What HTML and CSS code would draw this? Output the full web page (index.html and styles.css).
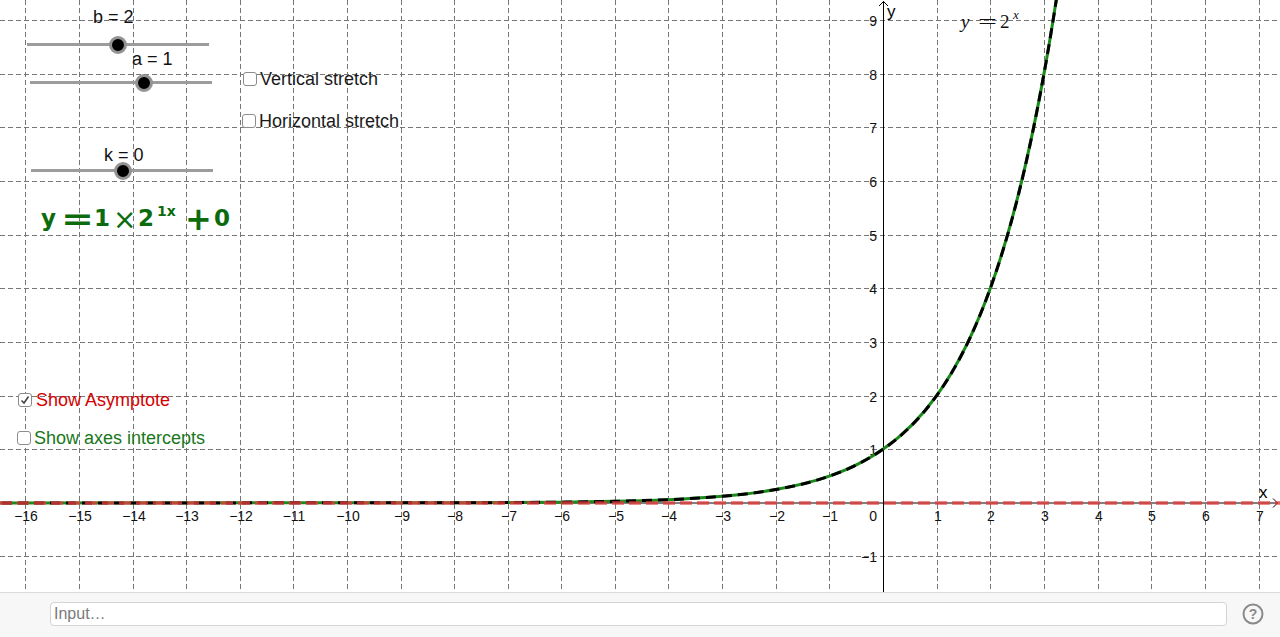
FILE: index.html
```html
<!DOCTYPE html>
<html lang="en">
<head>
<meta charset="utf-8">
<title>Exponential functions</title>
<link rel="stylesheet" href="styles.css">
</head>
<body>
<div class="app">
  <div class="canvas">
    <svg class="graph" width="1280" height="592" viewBox="0 0 1280 592" xmlns="http://www.w3.org/2000/svg">
      <g class="grid">
        <line x1="25.5" y1="0" x2="25.5" y2="592"/>
        <line x1="79.5" y1="0" x2="79.5" y2="592"/>
        <line x1="133.5" y1="0" x2="133.5" y2="592"/>
        <line x1="186.5" y1="0" x2="186.5" y2="592"/>
        <line x1="240.5" y1="0" x2="240.5" y2="592"/>
        <line x1="293.5" y1="0" x2="293.5" y2="592"/>
        <line x1="347.5" y1="0" x2="347.5" y2="592"/>
        <line x1="401.5" y1="0" x2="401.5" y2="592"/>
        <line x1="454.5" y1="0" x2="454.5" y2="592"/>
        <line x1="508.5" y1="0" x2="508.5" y2="592"/>
        <line x1="561.5" y1="0" x2="561.5" y2="592"/>
        <line x1="615.5" y1="0" x2="615.5" y2="592"/>
        <line x1="668.5" y1="0" x2="668.5" y2="592"/>
        <line x1="722.5" y1="0" x2="722.5" y2="592"/>
        <line x1="776.5" y1="0" x2="776.5" y2="592"/>
        <line x1="829.5" y1="0" x2="829.5" y2="592"/>
        <line x1="937.5" y1="0" x2="937.5" y2="592"/>
        <line x1="990.5" y1="0" x2="990.5" y2="592"/>
        <line x1="1044.5" y1="0" x2="1044.5" y2="592"/>
        <line x1="1098.5" y1="0" x2="1098.5" y2="592"/>
        <line x1="1151.5" y1="0" x2="1151.5" y2="592"/>
        <line x1="1205.5" y1="0" x2="1205.5" y2="592"/>
        <line x1="1259.5" y1="0" x2="1259.5" y2="592"/>
        <line x1="0" y1="20.5" x2="1280" y2="20.5"/>
        <line x1="0" y1="74.5" x2="1280" y2="74.5"/>
        <line x1="0" y1="127.5" x2="1280" y2="127.5"/>
        <line x1="0" y1="181.5" x2="1280" y2="181.5"/>
        <line x1="0" y1="235.5" x2="1280" y2="235.5"/>
        <line x1="0" y1="288.5" x2="1280" y2="288.5"/>
        <line x1="0" y1="342.5" x2="1280" y2="342.5"/>
        <line x1="0" y1="396.5" x2="1280" y2="396.5"/>
        <line x1="0" y1="449.5" x2="1280" y2="449.5"/>
        <line x1="0" y1="556.5" x2="1280" y2="556.5"/>
      </g>
      <g class="axes">
        <line x1="883.5" y1="1" x2="883.5" y2="592"/>
        <line x1="0" y1="503" x2="1278" y2="503"/>
        <polyline class="arrow" points="879,6 883.5,1.5 888,6"/>
        <polyline class="arrow" points="1273,498.5 1277.5,503 1273,507.5"/>
      </g>
      <g class="ticklabels xlabels">
        <text x="26" y="521">−16</text>
        <text x="80" y="521">−15</text>
        <text x="134" y="521">−14</text>
        <text x="187" y="521">−13</text>
        <text x="241" y="521">−12</text>
        <text x="294" y="521">−11</text>
        <text x="348" y="521">−10</text>
        <text x="402" y="521">−9</text>
        <text x="455" y="521">−8</text>
        <text x="509" y="521">−7</text>
        <text x="562" y="521">−6</text>
        <text x="616" y="521">−5</text>
        <text x="669" y="521">−4</text>
        <text x="723" y="521">−3</text>
        <text x="777" y="521">−2</text>
        <text x="830" y="521">−1</text>
        <text x="938" y="521">1</text>
        <text x="991" y="521">2</text>
        <text x="1045" y="521">3</text>
        <text x="1099" y="521">4</text>
        <text x="1152" y="521">5</text>
        <text x="1206" y="521">6</text>
        <text x="1260" y="521">7</text>
      </g>
      <g class="ticklabels ylabels">
        <text x="877" y="26">9</text>
        <text x="877" y="80">8</text>
        <text x="877" y="133">7</text>
        <text x="877" y="187">6</text>
        <text x="877" y="241">5</text>
        <text x="877" y="294">4</text>
        <text x="877" y="348">3</text>
        <text x="877" y="402">2</text>
        <text x="877" y="455">1</text>
        <text x="877" y="521">0</text>
        <text x="877" y="562">−1</text>
      </g>
      <text class="axisname" x="887" y="17">y</text>
      <text class="axisname" x="1259" y="498">x</text>
      <path class="curve-green" d="M -30 502.99 L 453.64 502.79 C 471.53 502.74 489.42 502.68 507.31 502.58 C 525.2 502.48 543.09 502.36 560.98 502.16 C 578.87 501.97 596.76 501.71 614.65 501.32 C 632.54 500.94 650.43 500.42 668.32 499.65 C 686.21 498.87 704.1 497.84 721.99 496.29 C 739.88 494.74 757.77 492.68 775.66 489.58 C 793.55 486.48 811.44 482.37 829.33 476.17 C 847.22 469.97 865.11 461.73 883 449.33 C 900.89 436.93 918.78 420.46 936.67 395.66 C 954.56 370.86 972.45 337.92 990.34 288.32 C 1008.23 238.72 1026.12 172.84 1044.01 73.64 C 1061.9 -25.56 1079.79 -157.31 1097.68 -355.72"/>
      <path class="curve-black" d="M -30 502.99 L 453.64 502.79 C 471.53 502.74 489.42 502.68 507.31 502.58 C 525.2 502.48 543.09 502.36 560.98 502.16 C 578.87 501.97 596.76 501.71 614.65 501.32 C 632.54 500.94 650.43 500.42 668.32 499.65 C 686.21 498.87 704.1 497.84 721.99 496.29 C 739.88 494.74 757.77 492.68 775.66 489.58 C 793.55 486.48 811.44 482.37 829.33 476.17 C 847.22 469.97 865.11 461.73 883 449.33 C 900.89 436.93 918.78 420.46 936.67 395.66 C 954.56 370.86 972.45 337.92 990.34 288.32 C 1008.23 238.72 1026.12 172.84 1044.01 73.64 C 1061.9 -25.56 1079.79 -157.31 1097.68 -355.72"/>
      <line class="asymptote" x1="0" y1="503" x2="1280" y2="503"/>
      <g class="formula">
        <text x="41" y="226">y</text>
        <text class="eq" x="61" y="229" textLength="33" lengthAdjust="spacingAndGlyphs">=</text>
        <text x="94" y="226">1</text>
        <text class="times" x="113" y="229">×</text>
        <text x="138" y="226">2</text>
        <text class="sup" x="157" y="216">1x</text>
        <text class="plus" x="185" y="230">+</text>
        <text x="214" y="226">0</text>
      </g>
      <g class="fnlabel">
        <text class="it" x="961" y="28">y</text>
        <text x="978" y="28" textLength="19" lengthAdjust="spacingAndGlyphs">=</text>
        <text x="1000" y="28">2</text>
        <text class="it sup" x="1013" y="19">x</text>
      </g>
    </svg>

    <div class="slider slider-b">
      <span class="slider-label">b = 2</span>
      <div class="track"><span class="thumb"></span></div>
    </div>
    <div class="slider slider-a">
      <span class="slider-label">a = 1</span>
      <div class="track"><span class="thumb"></span></div>
    </div>
    <div class="slider slider-k">
      <span class="slider-label">k = 0</span>
      <div class="track"><span class="thumb"></span></div>
    </div>

    <div class="check check-vert"><span class="box"></span><span>Vertical stretch</span></div>
    <div class="check check-horiz"><span class="box"></span><span>Horizontal stretch</span></div>
    <div class="check check-asym red"><span class="box checked"><svg width="12" height="12" viewBox="0 0 12 12"><polyline points="2.5,6.5 5,9 9.5,2.5"/></svg></span><span>Show Asymptote</span></div>
    <div class="check check-int green"><span class="box"></span><span>Show axes intercepts</span></div>
  </div>

  <div class="inputbar">
    <div class="input">Input…</div>
    <svg class="help" width="22" height="22" viewBox="0 0 22 22">
      <circle cx="11" cy="11" r="9.5"/>
      <text x="11" y="16">?</text>
    </svg>
  </div>
</div>
</body>
</html>
```

FILE: styles.css
```css
* { box-sizing: border-box; }
html, body {
  margin: 0;
  padding: 0;
  background: #ffffff;
  overflow: hidden;
}
body {
  width: 1280px;
  height: 637px;
  font-family: "Liberation Sans", Arial, sans-serif;
}
.app {
  display: flex;
  flex-direction: column;
  width: 1280px;
  height: 637px;
}
.canvas {
  position: relative;
  width: 1280px;
  height: 592px;
  overflow: hidden;
  background: #fff;
}
.graph {
  display: block;
}
.grid line {
  stroke: #777;
  stroke-width: 1;
  stroke-dasharray: 5 3;
}
.axes line {
  stroke: #000;
  stroke-width: 1;
}
.axes .arrow {
  fill: none;
  stroke: #000;
  stroke-width: 1;
}
.ticklabels text {
  font-family: "Liberation Sans", Arial, sans-serif;
  font-size: 14px;
  fill: #111;
}
.xlabels text { text-anchor: middle; }
.ylabels text { text-anchor: end; }
.axisname {
  font-family: "Liberation Sans", Arial, sans-serif;
  font-size: 17px;
  fill: #000;
}
.curve-green {
  fill: none;
  stroke: #1a8a1a;
  stroke-width: 3;
}
.curve-black {
  fill: none;
  stroke: #000;
  stroke-width: 3;
  stroke-dasharray: 10 6;
}
.asymptote {
  stroke: #e03c3c;
  stroke-opacity: 0.8;
  stroke-width: 3.5;
  stroke-dasharray: 12 5;
}
.formula text {
  font-family: "DejaVu Sans", sans-serif;
  font-weight: bold;
  font-size: 23px;
  fill: #0c6b0c;
}
.formula .eq {
  font-size: 31px;
}
.formula .times {
  font-weight: normal;
  font-size: 28px;
}
.formula .plus {
  font-size: 32px;
}
.formula .sup {
  font-size: 14px;
}
.fnlabel text {
  font-family: "Liberation Serif", "Times New Roman", serif;
  font-size: 19px;
  fill: #111;
}
.fnlabel .it { font-style: italic; }
.fnlabel .sup { font-size: 13px; }

/* sliders */
.slider {
  position: absolute;
  width: 182px;
  display: flex;
  flex-direction: column;
  align-items: flex-start;
}
.slider-b { left: 27px; top: 7px; }
.slider-a { left: 30px; top: 49px; }
.slider-k { left: 31px; top: 145px; }
.slider-label {
  font-size: 18px;
  line-height: 20px;
  color: #111;
  white-space: nowrap;
}
.slider-b .slider-label { margin-left: 66px; }
.slider-a .slider-label { margin-left: 102px; }
.slider-k .slider-label { margin-left: 73px; }
.track {
  position: relative;
  width: 182px;
  height: 3px;
  background: #9c9c9c;
}
.slider-b .track { margin-top: 16px; }
.slider-a .track { margin-top: 12px; }
.slider-k .track { margin-top: 4px; }
.thumb {
  position: absolute;
  top: 50%;
  width: 18px;
  height: 18px;
  margin: -9px 0 0 -9px;
  border-radius: 50%;
  background: #000;
  border: 3px solid #939393;
}
.slider-b .thumb { left: 91px; }
.slider-a .thumb { left: 114px; }
.slider-k .thumb { left: 92px; }

/* checkboxes */
.check {
  position: absolute;
  display: flex;
  align-items: center;
  gap: 3px;
  height: 20px;
  font-size: 18px;
  line-height: 20px;
  color: #1a1a1a;
  white-space: nowrap;
}
.check-vert { left: 243px; top: 69px; }
.check-horiz { left: 242px; top: 111px; }
.check-asym { left: 18px; top: 390px; gap: 4px; }
.check-int { left: 17px; top: 428px; }
.check.red { color: #d40000; }
.check.green { color: #17771a; }
.box {
  display: flex;
  align-items: center;
  justify-content: center;
  width: 14px;
  height: 14px;
  border: 1.5px solid #8c8c8c;
  border-radius: 3px;
  background: #fff;
}
.box svg polyline {
  fill: none;
  stroke: #444;
  stroke-width: 1.6;
}

/* input bar */
.inputbar {
  display: flex;
  align-items: flex-start;
  height: 45px;
  padding: 9px 0 0 50px;
  background: #f7f7f7;
  border-top: 1px solid #dcdcdc;
}
.input {
  width: 1177px;
  height: 24px;
  background: #fff;
  border: 1px solid #d4d4d4;
  border-radius: 4px;
  padding-left: 3px;
  font-size: 16px;
  line-height: 22px;
  color: #7a7a7a;
}
.help {
  margin: 1px 0 0 15px;
}
.help circle {
  fill: none;
  stroke: #8a8a8a;
  stroke-width: 2;
}
.help text {
  font-family: "Liberation Sans", Arial, sans-serif;
  font-weight: bold;
  font-size: 14px;
  text-anchor: middle;
  fill: #8a8a8a;
}
```
